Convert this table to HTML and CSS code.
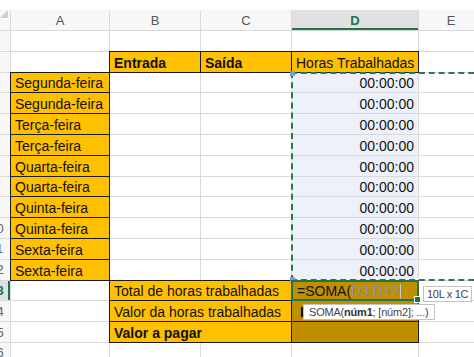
FILE: index.html
```html
<!DOCTYPE html>
<html lang="pt">
<head>
    <meta charset="UTF-8">
    <meta name="viewport" content="width=device-width, initial-scale=1.0">
    <title>Horas Trabalhadas</title>
    <link rel="stylesheet" href="styles.css">
</head>
<body>
    <div class="sheet">
        <!-- column headers -->
        <div class="hd corner"><span class="tri"></span></div>
        <div class="hd">A</div>
        <div class="hd">B</div>
        <div class="hd">C</div>
        <div class="hd hd-sel">D</div>
        <div class="hd">E</div>

        <div class="rh">1</div><div class="c"></div><div class="c"></div><div class="c"></div><div class="c"></div><div class="c"></div>

        <div class="rh">2</div><div class="c"></div>
        <div class="c lbl b">Entrada</div>
        <div class="c lbl b">Saída</div>
        <div class="c lbl">Horas Trabalhadas</div>
        <div class="c"></div>

        <div class="rh">3</div><div class="c lbl">Segunda-feira</div><div class="c"></div><div class="c"></div><div class="c num">00:00:00</div><div class="c"></div>
        <div class="rh">4</div><div class="c lbl">Segunda-feira</div><div class="c"></div><div class="c"></div><div class="c num">00:00:00</div><div class="c"></div>
        <div class="rh">5</div><div class="c lbl">Terça-feira</div><div class="c"></div><div class="c"></div><div class="c num">00:00:00</div><div class="c"></div>
        <div class="rh">6</div><div class="c lbl">Terça-feira</div><div class="c"></div><div class="c"></div><div class="c num">00:00:00</div><div class="c"></div>
        <div class="rh">7</div><div class="c lbl">Quarta-feira</div><div class="c"></div><div class="c"></div><div class="c num">00:00:00</div><div class="c"></div>
        <div class="rh">8</div><div class="c lbl">Quarta-feira</div><div class="c"></div><div class="c"></div><div class="c num">00:00:00</div><div class="c"></div>
        <div class="rh">9</div><div class="c lbl">Quinta-feira</div><div class="c"></div><div class="c"></div><div class="c num">00:00:00</div><div class="c"></div>
        <div class="rh">10</div><div class="c lbl">Quinta-feira</div><div class="c"></div><div class="c"></div><div class="c num">00:00:00</div><div class="c"></div>
        <div class="rh">11</div><div class="c lbl">Sexta-feira</div><div class="c"></div><div class="c"></div><div class="c num">00:00:00</div><div class="c"></div>
        <div class="rh">12</div><div class="c lbl">Sexta-feira</div><div class="c"></div><div class="c"></div><div class="c num">00:00:00</div><div class="c"></div>

        <div class="rh rh-sel">13</div><div class="c"></div>
        <div class="c lbl wide">Total de horas trabalhadas</div>
        <div class="c gold active">=SOMA(<span class="ref">D3:D12</span><span class="caret"></span></div>
        <div class="c"></div>

        <div class="rh">14</div><div class="c"></div>
        <div class="c lbl wide">Valor da horas trabalhadas</div>
        <div class="c gold edge"></div>
        <div class="c"></div>

        <div class="rh">15</div><div class="c"></div>
        <div class="c lbl wide b">Valor a pagar</div>
        <div class="c gold edge"></div>
        <div class="c"></div>

        <div class="rh">16</div><div class="c"></div><div class="c"></div><div class="c"></div><div class="c"></div><div class="c"></div>
        <div class="rh">17</div><div class="c"></div><div class="c"></div><div class="c"></div><div class="c"></div><div class="c"></div>

        <!-- reference range D3:D12 while the formula is being typed -->
        <div class="range">
            <span class="hdl tl"></span><span class="hdl tr"></span>
            <span class="hdl bl"></span><span class="hdl br"></span>
        </div>
    </div>

    <div class="tip size">10L x 1C</div>
    <div class="tip hint">SOMA(<b>núm1</b>; [núm2]; ...)</div>
</body>
</html>
```

FILE: styles.css
```css
html, body {
    margin: 0;
    overflow: hidden;
    background: #fff;
}
body {
    font-family: "Liberation Sans", Arial, sans-serif;
}
.sheet {
    position: relative;
    display: grid;
    grid-template-columns: 24px 98px 90px 90px 126px 64px;
    grid-template-rows: 20px repeat(17, 19.8px);
    gap: 1px;
    background: #d9d9d9;
    margin: 10px 0 0 -14px;
    width: max-content;
}

/* headers */
.hd {
    background: #f7f7f7;
    color: #555;
    font-size: 13px;
    display: flex;
    align-items: center;
    justify-content: center;
}
.corner {
    justify-content: flex-end;
    align-items: flex-start;
}
.tri {
    width: 0;
    height: 0;
    border-left: 8px solid transparent;
    border-bottom: 8px solid #cfcfcf;
    margin-right: 2px;
}
.hd-sel {
    background: #e1e1e1;
    color: #217346;
    font-weight: bold;
    box-shadow: inset 0 -2px 0 #217346;
}
.rh {
    background: #f7f7f7;
    color: #666;
    font-size: 13px;
    padding-right: 3px;
    display: flex;
    align-items: center;
    justify-content: center;
}
.rh-sel {
    background: #e1e1e1;
    color: #217346;
    font-weight: bold;
    box-shadow: inset -2px 0 0 #217346;
}

/* cells */
.c {
    background: #fff;
    color: #111;
    font-size: 14px;
    line-height: 16px;
    padding: 0 4px 1px;
    display: flex;
    align-items: flex-end;
    white-space: nowrap;
    min-width: 0;
}
.lbl {
    background: #ffc000;
    outline: 1px solid #1b1b1b;
}
.b {
    font-weight: bold;
}
.wide {
    grid-column: span 2;
}
.num {
    background: #edf1fa;
    justify-content: flex-end;
}
.gold {
    background: #bf8f00;
}
.edge {
    outline: 1px solid #1b1b1b;
}
.active {
    position: relative;
    z-index: 3;
    padding-left: 5px;
    outline: 2px solid #217346;
    outline-offset: -1px;
}
.active::after {
    content: "";
    position: absolute;
    right: -3px;
    bottom: -3px;
    width: 5px;
    height: 5px;
    background: #217346;
    border: 1px solid #fff;
}
.ref {
    color: #8595ae;
}
.caret {
    display: inline-block;
    width: 1px;
    height: 15px;
    margin-left: 1px;
    background: #c9c9c9;
}

/* dashed border around the referenced range, laid over column D */
.range {
    position: absolute;
    grid-column: 5;
    grid-row: 4 / 14;
    inset: -1px;
    border: 2px dashed #2b7363;
    z-index: 2;
}
.hdl {
    position: absolute;
    width: 5px;
    height: 5px;
    background: #6f9deb;
}
.tl { left: -3px; top: -3px; }
.tr { right: -3px; top: -3px; }
.bl { left: -3px; bottom: -3px; }
.br { right: -3px; bottom: -3px; }

/* tooltips */
.tip {
    position: absolute;
    background: #fff;
    border: 1px solid #c3c3c3;
    color: #444;
    font-size: 11px;
    line-height: 14px;
    white-space: nowrap;
    z-index: 5;
}
.size {
    left: 423px;
    top: 286px;
    padding: 0 3px;
    letter-spacing: -0.3px;
}
.hint {
    left: 303px;
    top: 304px;
    width: 125px;
    padding: 0 0 0 5px;
    letter-spacing: -0.2px;
}
.hint b {
    color: #333;
}
.hint::before {
    content: "";
    position: absolute;
    left: -3px;
    top: 2px;
    width: 2px;
    height: 10px;
    background: #111;
}
```
